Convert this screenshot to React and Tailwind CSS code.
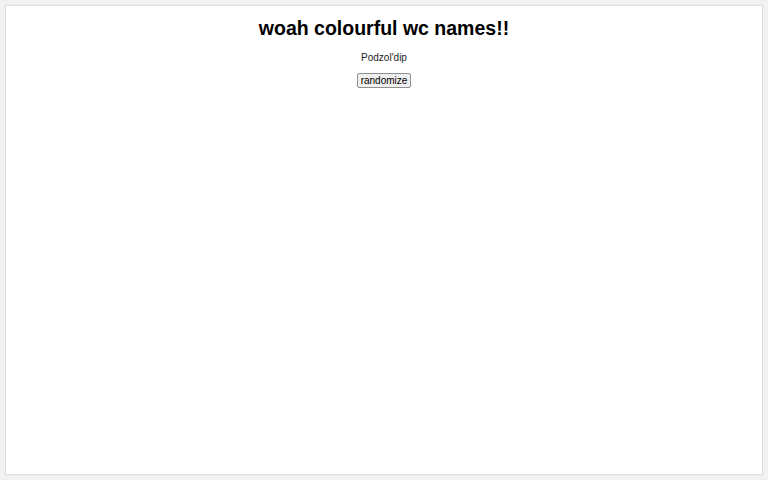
import { useState } from "react";

const NAMES = ["Podzol'dip", "Emberstar", "Mosspelt", "Ravenpaw", "Frostwhisker"];

export default function App() {
  const [name, setName] = useState(NAMES[0]);

  const randomize = () => {
    setName(NAMES[Math.floor(Math.random() * NAMES.length)]);
  };

  return (
    <div className="h-[480px] bg-[#f2f2f2] p-[5px] font-['Liberation_Sans',Arial,sans-serif]">
      <div className="h-[470px] border border-[#dcdcdc] bg-white flex flex-col items-center">
        <h1 className="mt-[10px] text-[19.5px] leading-[24px] font-bold text-black">
          woah colourful wc names!!
        </h1>
        <p className="mt-[12px] text-[10px] leading-[12px] text-[#222]">{name}</p>
        <button
          onClick={randomize}
          className="mt-[9px] h-[15px] px-[3px] text-[10px] leading-[12px] text-black bg-[#efefef] border border-[#8f8f8f] rounded-[2px]"
        >
          randomize
        </button>
      </div>
    </div>
  );
}
